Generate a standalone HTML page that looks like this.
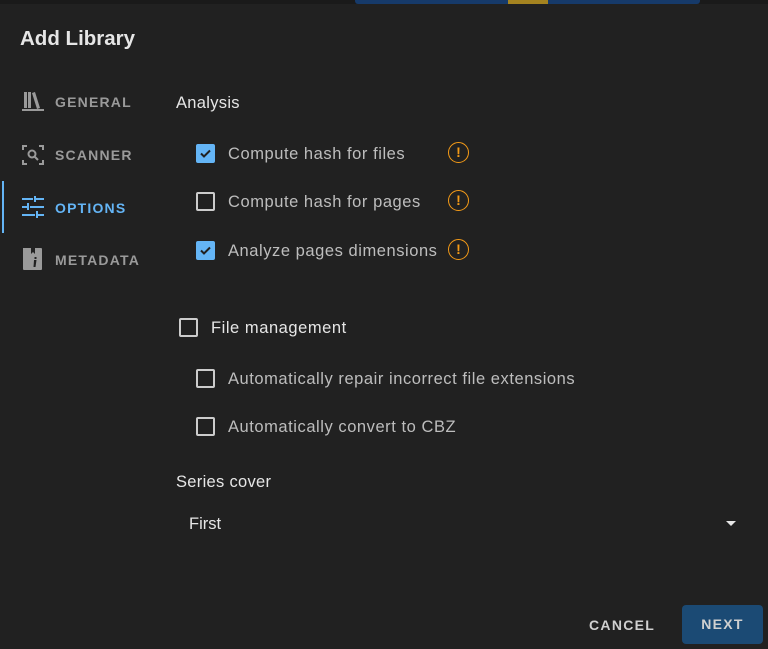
<!DOCTYPE html>
<html><head><style>
body{margin:0;width:768px;height:649px;background:#212121;font-family:"Liberation Sans",Roboto,sans-serif;position:relative;overflow:hidden;color:rgba(255,255,255,.87)}
.top{position:absolute;left:0;top:0;width:768px;height:4px;background:#1a1a1a}
.bar{position:absolute;left:355px;top:0;width:345px;height:4px;background:#163a6a;border-radius:0 0 3px 3px}
.gold{position:absolute;left:508px;top:0;width:40px;height:4px;background:#a48320}
.t{position:absolute;white-space:nowrap}
h1{position:absolute;left:20px;top:27px;margin:0;font-size:20.5px;font-weight:bold;color:#e6e6e6}
.nav{position:absolute;left:55px;font-size:14px;font-weight:bold;letter-spacing:1.2px;color:#9a9a9a}
.cb{position:absolute;width:15px;height:15px;border:2px solid #ccc;border-radius:2px}
.cb.on{background:#64b5f6;border-color:#64b5f6}
.lbl{position:absolute;font-size:16.5px;letter-spacing:0.55px;color:#bdbdbd}
.warn{position:absolute;width:19px;height:19px;border:1.8px solid #f59b17;border-radius:50%;color:#f59b17;font-weight:bold;font-size:14px;text-align:center;line-height:19px}
</style></head><body>
<div class="top"></div><div class="bar"></div><div class="gold"></div>
<h1>Add Library</h1>
<div style="position:absolute;left:2px;top:181px;width:2px;height:52px;background:#64b5f6"></div>
<svg style="position:absolute;left:22px;top:91px" width="22" height="21" viewBox="0 0 22 21" fill="#9a9a9a"><rect x="2" y="1" width="3" height="16"/><rect x="6" y="1" width="3" height="16"/><path d="M10 2l3-1 5 16-3 1z"/><rect x="0" y="18" width="22" height="2"/></svg>
<svg style="position:absolute;left:21px;top:143px" width="24" height="24" viewBox="0 0 24 24" fill="none" stroke="#9a9a9a" stroke-width="2"><path d="M2 7V3h4M18 3h4v4M22 17v4h-4M6 21H2v-4"/><circle cx="11" cy="11" r="3.5"/><path d="M13.5 13.5l3.5 3.5"/></svg>
<svg style="position:absolute;left:22px;top:196px" width="22" height="22" viewBox="0 0 22 22" fill="#64b5f6"><rect x="0" y="2" width="11" height="2"/><rect x="14" y="2" width="8" height="2"/><rect x="12" y="0" width="2" height="6"/><rect x="0" y="10" width="5" height="2"/><rect x="8" y="10" width="14" height="2"/><rect x="5" y="7" width="2" height="7"/><rect x="0" y="18" width="13" height="2"/><rect x="16" y="18" width="6" height="2"/><rect x="14" y="15" width="2" height="7"/></svg>
<svg style="position:absolute;left:23px;top:247px" width="20" height="24" viewBox="0 0 20 24"><path d="M0 1h8v6l2-2 2 2V1h6a1 1 0 011 1v20a1 1 0 01-1 1H1a1 1 0 01-1-1z" fill="#9a9a9a"/><rect x="11.5" y="10" width="2" height="2" fill="#212121"/><path d="M11 13h2.5l-1 7h-2z" fill="#212121"/></svg>
<div class="nav t" style="top:94px">GENERAL</div>
<div class="nav t" style="top:147px">SCANNER</div>
<div class="nav t" style="top:200px;color:#64b5f6">OPTIONS</div>
<div class="nav t" style="top:252px">METADATA</div>
<div class="t" style="left:176px;top:94px;font-size:16.5px;letter-spacing:0.3px;color:#e6e6e6">Analysis</div>
<div class="cb on" style="left:196px;top:144px"><svg width="15" height="15" viewBox="0 0 15 15"><path d="M3 7.5l3 3 6-6" stroke="#212121" stroke-width="2" fill="none"/></svg></div>
<div class="lbl t" style="left:228px;top:145px">Compute hash for files</div>
<div class="warn" style="left:448px;top:142px">!</div>
<div class="cb" style="left:196px;top:192px"></div>
<div class="lbl t" style="left:228px;top:193px">Compute hash for pages</div>
<div class="warn" style="left:448px;top:190px">!</div>
<div class="cb on" style="left:196px;top:241px"><svg width="15" height="15" viewBox="0 0 15 15"><path d="M3 7.5l3 3 6-6" stroke="#212121" stroke-width="2" fill="none"/></svg></div>
<div class="lbl t" style="left:228px;top:242px">Analyze pages dimensions</div>
<div class="warn" style="left:448px;top:239px">!</div>
<div class="cb" style="left:179px;top:318px"></div>
<div class="lbl t" style="left:211px;top:319px;color:#e6e6e6">File management</div>
<div class="cb" style="left:196px;top:369px"></div>
<div class="lbl t" style="left:228px;top:370px">Automatically repair incorrect file extensions</div>
<div class="cb" style="left:196px;top:417px"></div>
<div class="lbl t" style="left:228px;top:418px">Automatically convert to CBZ</div>
<div class="t" style="left:176px;top:473px;font-size:16.5px;letter-spacing:0.3px;color:#e6e6e6">Series cover</div>
<div class="t" style="left:189px;top:515px;font-size:16.5px;color:#e6e6e6">First</div>
<div style="position:absolute;left:726px;top:521px;width:0;height:0;border-left:5px solid transparent;border-right:5px solid transparent;border-top:5px solid #e6e6e6"></div>
<div class="t" style="left:589px;top:617px;font-size:14px;font-weight:bold;letter-spacing:1.3px;color:#d0d0d0">CANCEL</div>
<div style="position:absolute;left:682px;top:605px;width:81px;height:39px;background:#1b4a74;border-radius:4px;color:#d0d0d0;font-size:14px;font-weight:bold;letter-spacing:1.3px;text-align:center;line-height:39px">NEXT</div>
</body></html>
